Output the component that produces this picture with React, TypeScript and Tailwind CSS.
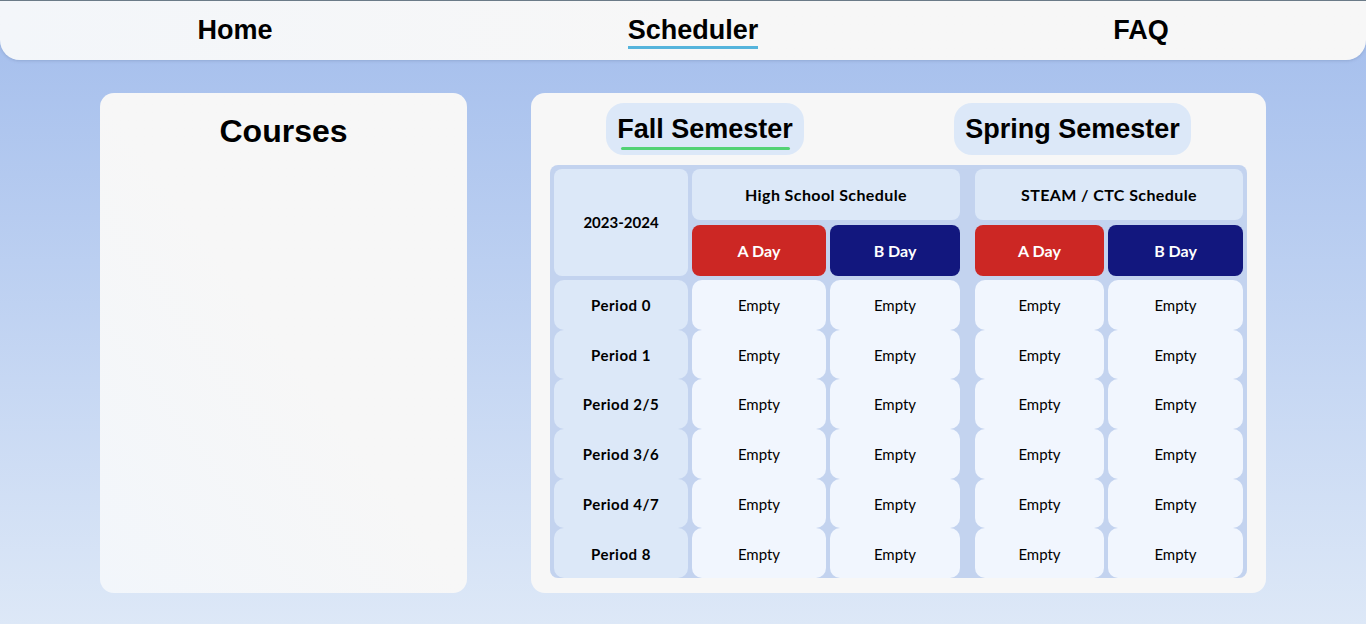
import React from "react";

const cols = "grid grid-cols-[134px_134px_130px_7px_129px_135px] gap-x-[4px]";
const tableFont = { fontFamily: '"Gill Sans", "Gill Sans MT", Lato, "Noto Sans", sans-serif' };

const periods = ["Period 0", "Period 1", "Period 2/5", "Period 3/6", "Period 4/7", "Period 8"];

function EmptyCell() {
  return (
    <div className="flex items-center justify-center rounded-[10px] bg-[#f1f6fe] pt-[1px] text-[15px] text-black">
      Empty
    </div>
  );
}

export default function App() {
  return (
    <div
      className="min-h-[624px] w-full bg-linear-to-b from-[#a3bdec] to-[#dde8f7]"
      style={{ fontFamily: '"Liberation Sans", Arial, sans-serif' }}
    >
      {/* Nav */}
      <nav className="grid h-[60px] grid-cols-[470px_446px_450px] items-center rounded-b-[20px] border-t border-[#6b7b88] bg-linear-to-r from-[#f3f6fa] via-[#f7f7f7] to-[#f7f7f7] shadow-[0_1px_3px_rgba(80,100,140,0.25)]">
        <div className="flex justify-center">
          <span className="text-[27px] font-bold text-black">Home</span>
        </div>
        <div className="flex justify-center">
          <span className="relative text-[27px] font-bold text-black">
            Scheduler
            <span className="absolute bottom-[2px] left-0 right-0 h-[3px] bg-[#55b4dc]" />
          </span>
        </div>
        <div className="flex justify-center">
          <span className="text-[27px] font-bold text-black">FAQ</span>
        </div>
      </nav>

      {/* Main */}
      <div className="flex gap-[64px] px-[100px] pt-[33px]">
        {/* Courses panel */}
        <div className="h-[500px] w-[367px] rounded-[14px] bg-linear-to-tr from-[#f2f6fb] via-[#f7f7f7] to-[#f7f7f7] pt-[19px]">
          <h2 className="text-center text-[32px] font-bold leading-[38px] text-black">Courses</h2>
        </div>

        {/* Scheduler panel */}
        <div className="flex h-[500px] w-[735px] flex-col rounded-[14px] bg-[#f7f7f7] pt-[10px]">
          <div className="flex justify-around">
            <div className="relative flex h-[52px] items-center rounded-[18px] bg-[#dce8f8] px-[11px]">
              <span className="text-[27px] font-bold text-black">Fall Semester</span>
              <span className="absolute bottom-[5px] left-[15px] right-[14px] h-[3px] rounded-full bg-[#52d274]" />
            </div>
            <div className="flex h-[52px] items-center rounded-[18px] bg-[#dce8f8] px-[11px]">
              <span className="text-[27px] font-bold text-black">Spring Semester</span>
            </div>
          </div>

          {/* Table */}
          <div
            className="mx-[19px] mt-[10px] h-[413px] overflow-hidden rounded-[8px] bg-[#c3d3ef] px-[4px] pt-[4px]"
            style={tableFont}
          >
            <div className={`${cols} grid-rows-[51px_51px] gap-y-[5px]`}>
              <div className="row-span-2 flex items-center justify-center rounded-[8px] bg-[#dce8f8] text-[15px] font-bold text-black">
                2023-2024
              </div>
              <div className="col-span-2 flex items-center justify-center rounded-[8px] bg-[#dce8f8] text-[16px] font-bold tracking-[0.4px] text-black">
                High School Schedule
              </div>
              <div className="row-span-2" />
              <div className="col-span-2 flex items-center justify-center rounded-[8px] bg-[#dce8f8] text-[16px] font-bold tracking-[0.4px] text-black">
                STEAM / CTC Schedule
              </div>
              <div className="flex items-center justify-center rounded-[8px] bg-[#cc2724] text-[16px] font-bold text-white">
                A Day
              </div>
              <div className="flex items-center justify-center rounded-[8px] bg-[#12177e] text-[16px] font-bold text-white">
                B Day
              </div>
              <div className="flex items-center justify-center rounded-[8px] bg-[#cc2724] text-[16px] font-bold text-white">
                A Day
              </div>
              <div className="flex items-center justify-center rounded-[8px] bg-[#12177e] text-[16px] font-bold text-white">
                B Day
              </div>
            </div>

            <div className="mt-[4px] flex flex-col">
              {periods.map((p) => (
                <div key={p} className={`${cols} h-[49.7px] shrink-0`}>
                  <div className="flex items-center justify-center rounded-[10px] bg-[#dce8f8] pt-[1px] text-[15px] font-bold tracking-[0.5px] text-black">
                    {p}
                  </div>
                  <EmptyCell />
                  <EmptyCell />
                  <div />
                  <EmptyCell />
                  <EmptyCell />
                </div>
              ))}
            </div>
          </div>
        </div>
      </div>
    </div>
  );
}
